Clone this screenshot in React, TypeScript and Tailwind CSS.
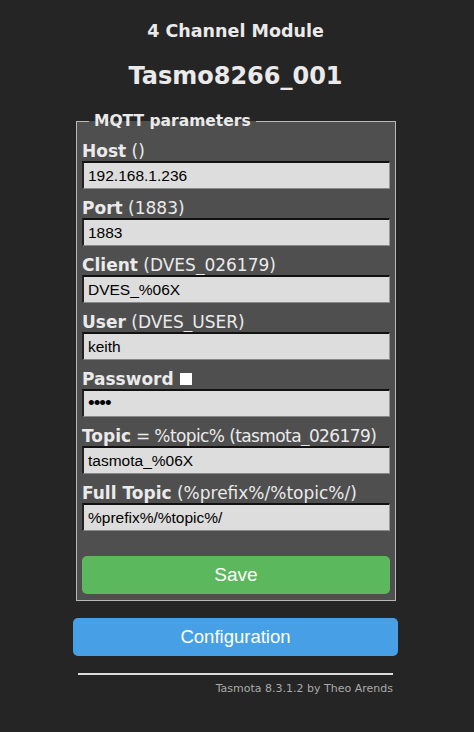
const fields = [
  { label: "Host", hint: " ()", value: "192.168.1.236" },
  { label: "Port", hint: " (1883)", value: "1883" },
  { label: "Client", hint: " (DVES_026179)", value: "DVES_%06X" },
  { label: "User", hint: " (DVES_USER)", value: "keith" },
  { label: "Password", hint: "", value: "••••", password: true },
  { label: "Topic", hint: " = %topic% (tasmota_026179)", value: "tasmota_%06X", tight: true },
  { label: "Full Topic", hint: " (%prefix%/%topic%/)", value: "%prefix%/%topic%/" },
];

export default function App() {
  return (
    <div className="min-h-[732px] bg-[#252525] text-[#eaeaea] font-['DejaVu_Sans',Verdana,sans-serif]">
      <div className="w-[325px] ml-[73px] pt-[20px]">
        <h3 className="text-center font-bold text-[17.5px] leading-[22px]">4 Channel Module</h3>
        <h2 className="text-center font-bold text-[24px] leading-[30px] mt-[19px]">Tasmo8266_001</h2>

        <fieldset className="ml-[3px] mr-[2px] mt-[21px] border border-[#b8b8b8] bg-[#4f4f4f] px-[5px] pb-[6px]">
          <legend className="ml-[7px] px-[5px] font-bold text-[15.5px] leading-[18px]">MQTT parameters</legend>
          <div className="flex flex-col gap-[9px] mt-[11px]">
            {fields.map((f) => (
              <div key={f.label} className="flex flex-col">
                <div className="text-[17px] leading-[20px] flex items-center">
                  <span className="font-bold">{f.label}</span>
                  <span className={f.tight ? "whitespace-pre tracking-[-0.6px]" : "whitespace-pre"}>{f.hint}</span>
                  {f.password && <span className="ml-[6px] w-[12px] h-[12px] bg-white inline-block" />}
                </div>
                <div className="h-[28px] bg-[#dddddd] border-t-2 border-l-2 border-t-[#111] border-l-[#222] border-b border-r border-b-[#888] border-r-[#999] px-[4px] flex items-center text-black text-[15.5px] font-['Liberation_Sans',Arial,sans-serif]">
                  {f.password ? <span className="text-[19px] tracking-[-1px]">{f.value}</span> : f.value}
                </div>
              </div>
            ))}
          </div>
          <button className="w-full mt-[25px] h-[38px] rounded-[5px] bg-[#5cb85c] text-white text-[19px] font-['Liberation_Sans',Arial,sans-serif]">
            Save
          </button>
        </fieldset>

        <button className="w-full mt-[17px] h-[38px] rounded-[5px] bg-[#47a0e6] text-white text-[18.5px] font-['Liberation_Sans',Arial,sans-serif]">
          Configuration
        </button>

        <div className="mx-[5px] mt-[17px] h-[2px] bg-[#dcdcdc]" />
        <div className="mx-[5px] mt-[6px] text-right text-[11px] text-[#aaaaaa]">Tasmota 8.3.1.2 by Theo Arends</div>
      </div>
    </div>
  );
}
